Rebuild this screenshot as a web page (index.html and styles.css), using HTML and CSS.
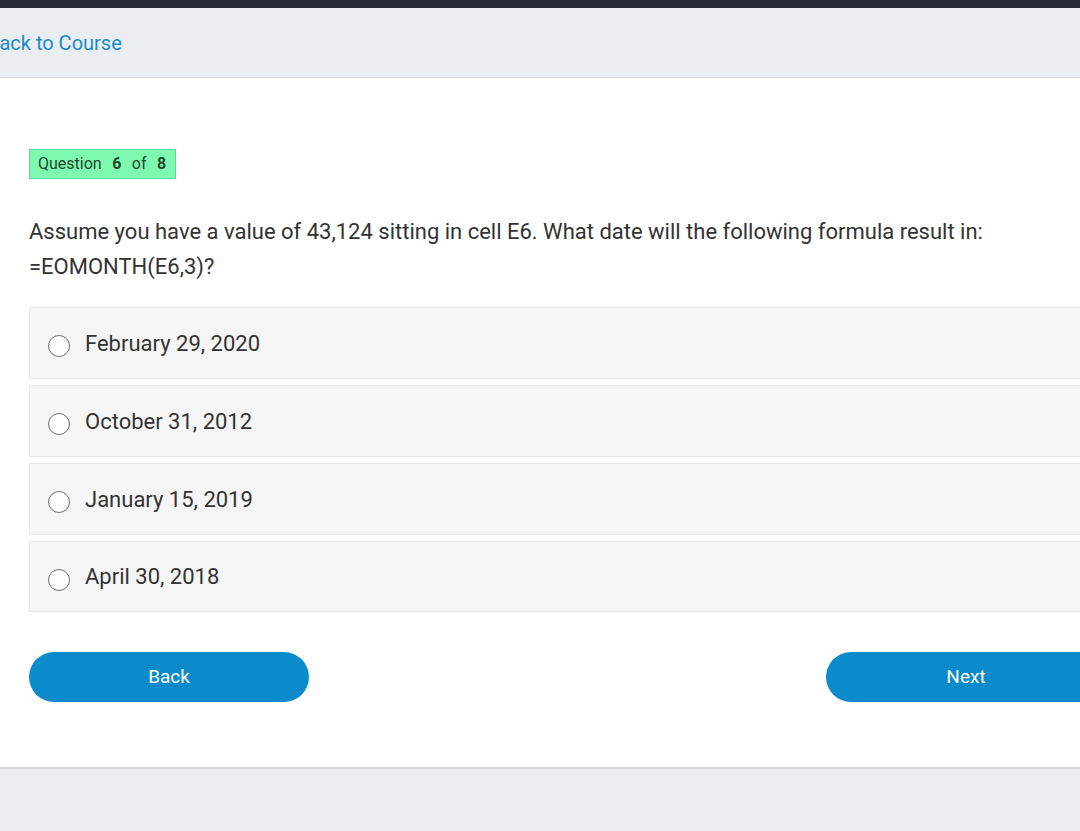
FILE: index.html
```html
<!DOCTYPE html>
<html lang="en">
<head>
<meta charset="utf-8">
<title>Quiz</title>
<link rel="stylesheet" href="styles.css">
</head>
<body>
<div class="topbar"></div>
<header class="header">
  <a class="back-link" href="#">Back to Course</a>
</header>
<main class="main">
  <div class="quiz">
    <div class="badge">Question <b>6</b> of <b>8</b></div>
    <p class="question">Assume you have a value of 43,124 sitting in cell E6. What date will the following formula result in: =EOMONTH(E6,3)?</p>
    <div class="options">
      <label class="option"><span class="radio"></span><span class="opt-text">February 29, 2020</span></label>
      <label class="option"><span class="radio"></span><span class="opt-text">October 31, 2012</span></label>
      <label class="option"><span class="radio"></span><span class="opt-text">January 15, 2019</span></label>
      <label class="option"><span class="radio"></span><span class="opt-text">April 30, 2018</span></label>
    </div>
    <div class="nav">
      <button class="btn">Back</button>
      <button class="btn">Next</button>
    </div>
  </div>
</main>
<footer class="footer"></footer>
</body>
</html>
```

FILE: styles.css
```css
html, body {
  margin: 0;
  padding: 0;
  overflow: hidden;
  height: 831px;
}
body {
  font-family: Roboto, "Liberation Sans", sans-serif;
  color: #333;
  background: #eaeef2;
}
.topbar {
  height: 8px;
  background: #262b33;
}
.header {
  height: 69px;
  background: #eaeef2;
  border-bottom: 1px solid #d8dce0;
  display: flex;
  align-items: center;
  overflow: hidden;
}
.back-link {
  font-size: 20px;
  color: #1a8bc3;
  text-decoration: none;
  margin-left: -13px;
}
.main {
  background: #fff;
  height: 689px;
  border-bottom: 2px solid #d6dadf;
}
.quiz {
  width: 1077px;
  padding: 71px 0 0 29px;
}
.badge {
  display: inline-block;
  background: #80f9b0;
  border: 1px solid #5fd98f;
  color: #1c4a2d;
  font-size: 16px;
  line-height: 28px;
  padding: 0 9px 0 8px;
  word-spacing: 6.5px;
}
.badge b {
  font-weight: 700;
}
.question {
  font-size: 22px;
  line-height: 35px;
  margin: 35px 0 23px;
  color: #333;
}
.options {
  display: flex;
  flex-direction: column;
  gap: 6px;
}
.option {
  display: flex;
  align-items: center;
  height: 70px;
  background: #f5f5f5;
  border: 1px solid #e6e6e6;
  padding-left: 18px;
}
.option:last-child {
  height: 69px;
}
.radio {
  width: 20px;
  height: 20px;
  border: 1px solid #6f6f6f;
  border-radius: 50%;
  background: #fff;
  margin-top: 6px;
  flex: none;
}
.opt-text {
  font-size: 22px;
  color: #333;
  margin-left: 15px;
}
.nav {
  display: flex;
  justify-content: space-between;
  margin-top: 40px;
}
.btn {
  width: 280px;
  height: 50px;
  border: none;
  border-radius: 25px;
  background: #0b8bcb;
  color: #fff;
  font-family: Roboto, "Liberation Sans", sans-serif;
  font-size: 19px;
  padding-bottom: 3px;
  cursor: pointer;
}
.footer {
  background: #eaeef2;
  height: 62px;
}
```
